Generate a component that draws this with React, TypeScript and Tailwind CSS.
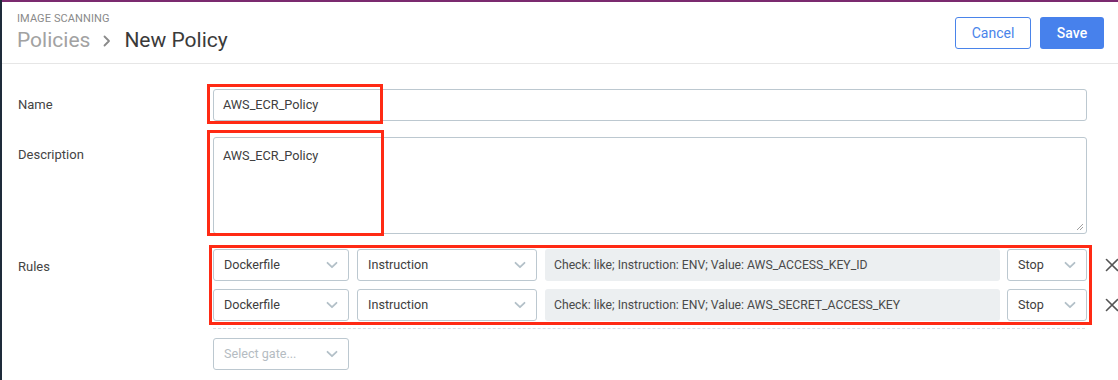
import React from "react";

const Chevron = () => (
  <svg width="14" height="14" viewBox="0 0 14 14" fill="none" className="shrink-0">
    <path d="M2.5 4.8 L7 9.2 L11.5 4.8" stroke="#b3c0c8" strokeWidth="1.8" strokeLinecap="round" strokeLinejoin="round" />
  </svg>
);

const Select = ({ label, width, placeholder }: { label: string; width: string; placeholder?: boolean }) => (
  <div className={`${width} h-[32px] shrink-0 flex items-center justify-between border border-[#bcc8d0] rounded-[3px] bg-white pl-[10px] pr-[9px] text-[12.6px]`}>
    <span className={placeholder ? "text-[#b5bcc2]" : "text-[#404040]"}>{label}</span>
    <Chevron />
  </div>
);

const XIcon = () => (
  <svg width="14" height="14" viewBox="0 0 14 14" className="shrink-0">
    <path d="M1.5 1.5 L12.5 12.5 M12.5 1.5 L1.5 12.5" stroke="#555" strokeWidth="1.6" strokeLinecap="round" />
  </svg>
);

const RuleRow = ({ value }: { value: string }) => (
  <div className="flex items-center">
    <Select label="Dockerfile" width="w-[136px]" />
    <div className="w-[8px] shrink-0" />
    <Select label="Instruction" width="w-[180px]" />
    <div className="w-[8px] shrink-0" />
    <div className="w-[455px] h-[32px] shrink-0 flex items-center bg-[#eceff1] rounded-[3px] px-[9px] text-[#4a4a4a] text-[12.2px]">
      {value}
    </div>
    <div className="w-[7px] shrink-0" />
    <Select label="Stop" width="w-[80px]" />
    <div className="w-[18px] shrink-0" />
    <XIcon />
  </div>
);

export default function App() {
  return (
    <div
      className="w-[1118px] h-[380px] bg-white overflow-hidden border-l-[2px] border-[#1e2b3a] text-[13px]"
      style={{ fontFamily: "Roboto, 'Liberation Sans', sans-serif" }}
    >
      <div className="h-[2px] bg-[#7b2a6f]" />
      <div className="h-[62px] flex items-start justify-between border-b border-[#e6e6e6] pl-[15px] pr-[14px]">
        <div className="pt-[10px]">
          <div className="text-[11px] leading-[13px] text-[#8a8a8a] tracking-[0.1px]">IMAGE SCANNING</div>
          <div className="flex items-center mt-[2px] text-[21px] leading-[26px]">
            <span className="text-[#a2a2a2]">Policies</span>
            <svg width="14" height="14" viewBox="0 0 14 14" className="mx-[10px] mt-[2px]">
              <path d="M4.5 2.5 L9 7 L4.5 11.5" stroke="#8a8a8a" strokeWidth="1.8" fill="none" strokeLinecap="round" strokeLinejoin="round" />
            </svg>
            <span className="text-[#3a3a3a]">New Policy</span>
          </div>
        </div>
        <div className="flex items-center gap-[9px] pt-[15px]">
          <button className="w-[76px] h-[32px] border border-[#4a84ea] rounded-[3px] text-[#4a84ea] text-[14px] bg-white">Cancel</button>
          <button className="w-[64px] h-[32px] rounded-[3px] bg-[#4781ec] text-white text-[14px] font-medium">Save</button>
        </div>
      </div>

      <div className="pl-[16px] pr-[31px] pt-[25px] flex flex-col">
        <div className="flex items-center">
          <div className="w-[195px] shrink-0 text-[#444]">Name</div>
          <div className="relative flex-1">
            <div className="h-[32px] flex items-center border border-[#bcc8d0] rounded-[3px] px-[9px] text-[#404040] text-[12.7px]">AWS_ECR_Policy</div>
            <div className="absolute left-[-6px] top-[-5px] w-[176px] h-[40px] border-[3px] border-[#ff2a14]" />
          </div>
        </div>

        <div className="flex items-start mt-[16px]">
          <div className="w-[195px] shrink-0 text-[#444] pt-[8px]">Description</div>
          <div className="relative flex-1">
            <div className="h-[97px] border border-[#bcc8d0] rounded-[3px] px-[9px] pt-[8px] text-[#404040] text-[12.7px] relative">
              AWS_ECR_Policy
              <svg width="8" height="8" viewBox="0 0 8 8" className="absolute right-[2px] bottom-[2px]">
                <path d="M7 1 L1 7 M7 4 L4 7" stroke="#888" strokeWidth="0.8" />
              </svg>
            </div>
            <div className="absolute left-[-6px] top-[-7px] w-[177px] h-[106px] border-[3px] border-[#ff2a14]" />
          </div>
        </div>

        <div className="flex items-start mt-[15px]">
          <div className="w-[195px] shrink-0 text-[#444] pt-[8px]">Rules</div>
          <div className="flex flex-col shrink-0">
            <div className="relative flex flex-col gap-[8px]">
              <RuleRow value="Check: like; Instruction: ENV; Value: AWS_ACCESS_KEY_ID" />
              <RuleRow value="Check: like; Instruction: ENV; Value: AWS_SECRET_ACCESS_KEY" />
              <div className="absolute left-[-4px] top-[-4px] w-[883px] h-[80px] border-[3px] border-[#ff2a14]" />
            </div>
            <div className="w-[872px] mt-[7px] border-t border-dashed border-[#d6dde2]" />
            <div className="mt-[9px]">
              <Select label="Select gate..." width="w-[136px]" placeholder />
            </div>
          </div>
        </div>
      </div>
    </div>
  );
}
